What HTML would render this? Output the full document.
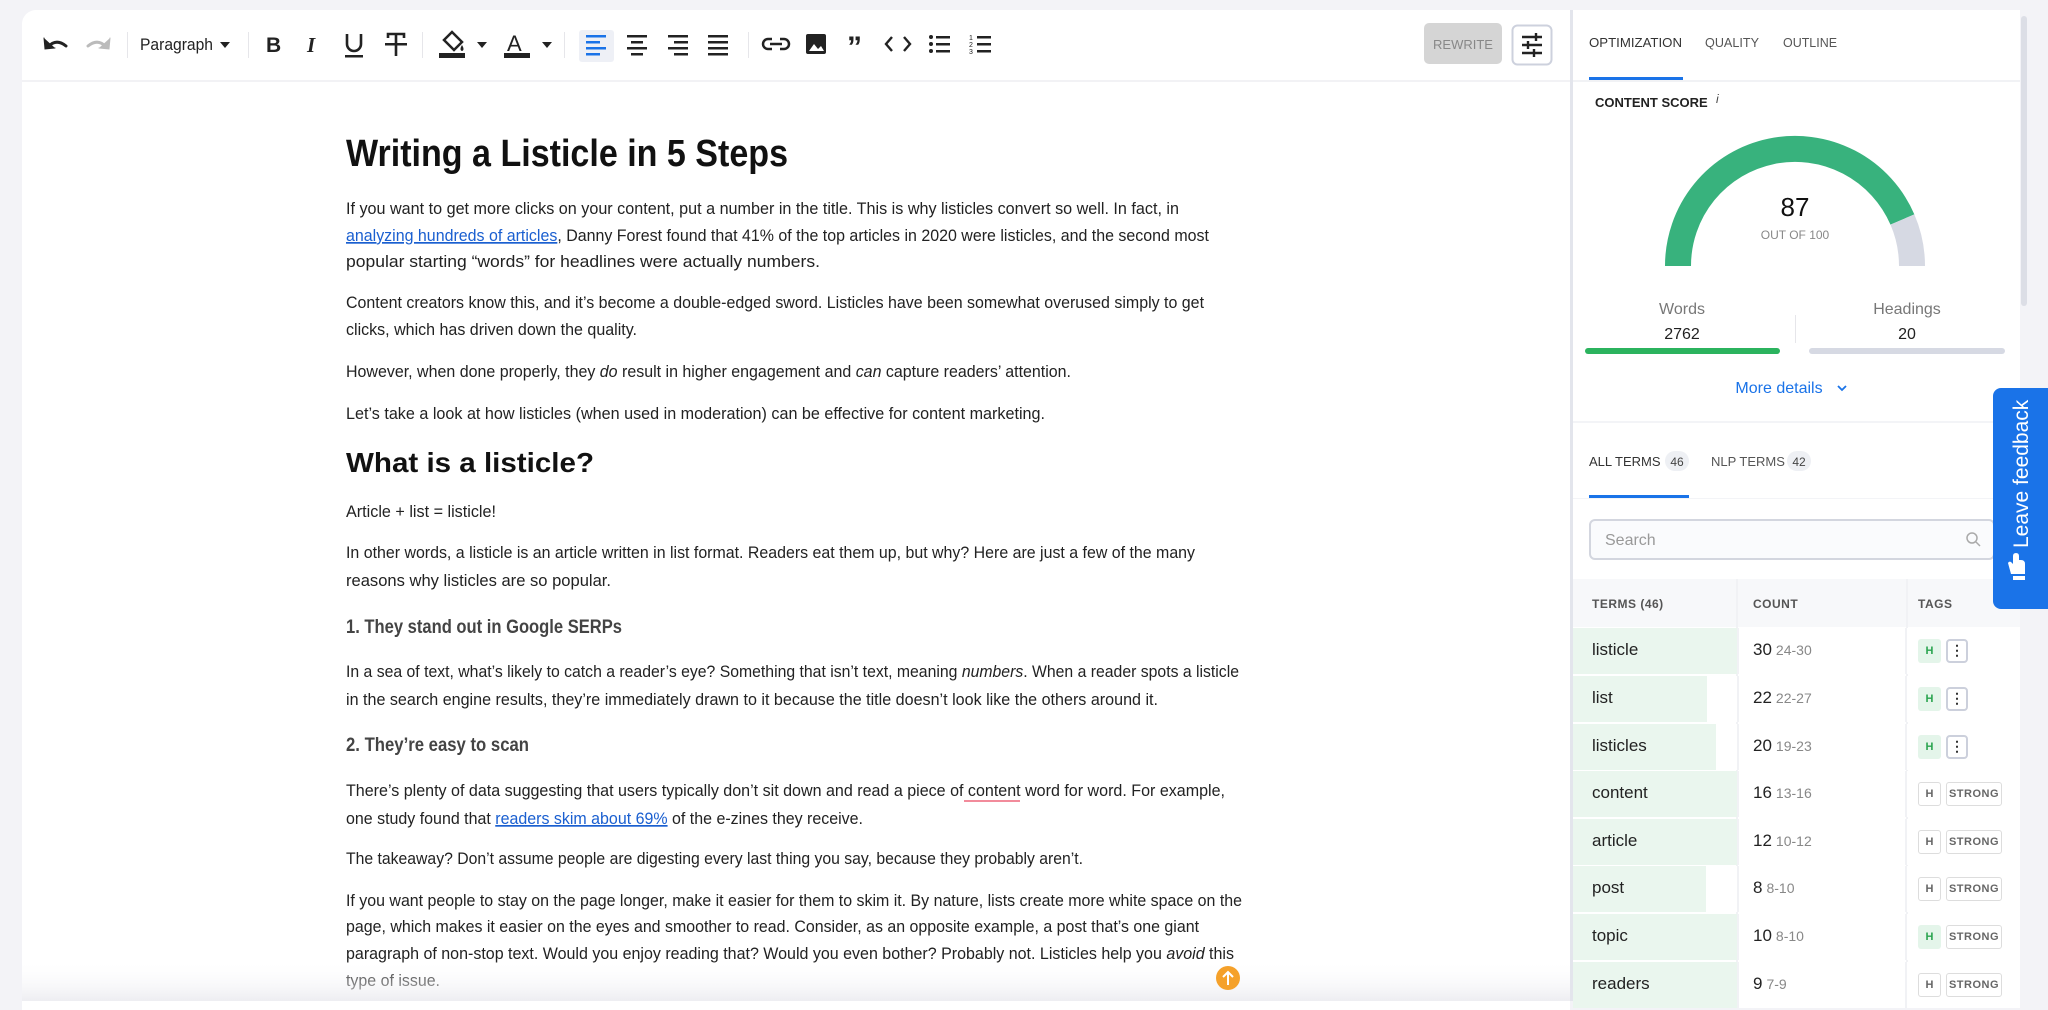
<!DOCTYPE html>
<html><head><meta charset="utf-8"><style>
*{margin:0;padding:0;box-sizing:border-box}
html,body{width:2048px;height:1001px;overflow:hidden;background:#f3f3f7;font-family:"Liberation Sans",sans-serif}
.card{position:absolute;left:22px;top:10px;width:1548px;height:1000px;background:#fff;border-top-left-radius:14px}
.tb{position:absolute;left:22px;top:10px;width:1548px;height:72px;border-bottom:2px solid #f2f2f5}
.sep{position:absolute;top:32px;width:1px;height:26px;background:#e6e6ea}
.ic{position:absolute}
.panel{position:absolute;left:1570px;top:10px;width:450px;height:991px;background:#fff;border-left:3px solid #e3e5ec}
.row{position:absolute;left:1573px;width:447px;height:46px;background:#fff}
.row .g{position:absolute;left:0;top:0;height:46px;background:#eaf6ee}
.row .term{position:absolute;left:19px;top:12px;font-size:17px;color:#222}
.row .cnt{position:absolute;left:180px;top:12px;font-size:17px;color:#222}
.row .cnt span{color:#888;font-size:14px;margin-left:4px}
.cw{position:absolute;left:164px;top:0;width:170px;height:46px;background:#fff;border-left:2px solid #f1f2f5;border-right:2px solid #f1f2f5}
.hb{position:absolute;left:345px;top:11px;width:23px;height:24px;border-radius:3px;font-size:11px;font-weight:bold;text-align:center;line-height:24px}
.hg{background:#e4f5ea;color:#2aa44f}
.hw{background:#fff;color:#666;border:1px solid #ddd;line-height:22px}
.dots{position:absolute;left:373px;top:11px;width:22px;height:24px;border:2px solid #ccd0dc;border-radius:4px;text-align:center;font-size:14px;font-weight:bold;line-height:18px;color:#333}
.strong{position:absolute;left:373px;top:11px;width:56px;height:24px;border:1px solid #ddd;border-radius:3px;font-size:11px;font-weight:bold;color:#666;text-align:center;line-height:22px;letter-spacing:.5px}
</style></head><body>
<div class="card"></div>
<div class="tb"></div>
<svg class="ic" style="left:0;top:0" width="1570" height="82">
<g fill="none" stroke-linecap="round">
<path d="M48 47 Q56 38 66 46" stroke="#222" stroke-width="3"/><path d="M44 38 L45 49 L55 48" fill="#222" stroke="#222" stroke-width="1"/>
<path d="M106 47 Q98 38 88 46" stroke="#bbb" stroke-width="3"/><path d="M110 38 L109 49 L99 48" fill="#bbb" stroke="#bbb" stroke-width="1"/>
</g>
<text x="140" y="50" font-size="17" fill="#222" font-family="Liberation Sans" textLength="73" lengthAdjust="spacingAndGlyphs">Paragraph</text>
<path d="M220 42h10l-5 6z" fill="#222"/>
<text x="266" y="52" font-size="21" font-weight="bold" fill="#222">B</text>
<text x="307" y="52" font-size="21" font-weight="bold" font-style="italic" fill="#222" font-family="Liberation Serif">I</text>
<path d="M347 34v10a7 7 0 0 0 14 0V34" stroke="#222" stroke-width="2.6" fill="none"/><rect x="345" y="55" width="18" height="2.5" fill="#222"/>
<path d="M396 34h-8v4M396 34h8v4M396 34v22" stroke="#222" stroke-width="2.6" fill="none"/><rect x="385" y="43" width="22" height="2.5" fill="#222"/>
<path d="M452 32 l10 10 -8 8 -10 -10z" stroke="#222" stroke-width="2.5" fill="none"/><path d="M462 45 q3 5 0 6 q-3 -1 0 -6z" fill="#222"/><rect x="439" y="53" width="26" height="5" fill="#222"/>
<path d="M477 42h10l-5 6z" fill="#222"/>
<text x="507" y="51" font-size="22" fill="#222">A</text><rect x="504" y="53" width="26" height="5" fill="#222"/>
<path d="M542 42h10l-5 6z" fill="#222"/>
<rect x="579" y="30" width="35" height="32" rx="3" fill="#eef0f6"/>
<g fill="#1a73e8"><rect x="586" y="35" width="20" height="2.5"/><rect x="586" y="41" width="14" height="2.5"/><rect x="586" y="47" width="20" height="2.5"/><rect x="586" y="53" width="14" height="2.5"/></g>
<g fill="#222"><rect x="627" y="35" width="20" height="2.5"/><rect x="631" y="41" width="12" height="2.5"/><rect x="627" y="47" width="20" height="2.5"/><rect x="631" y="53" width="12" height="2.5"/>
<rect x="668" y="35" width="20" height="2.5"/><rect x="674" y="41" width="14" height="2.5"/><rect x="668" y="47" width="20" height="2.5"/><rect x="674" y="53" width="14" height="2.5"/>
<rect x="708" y="35" width="20" height="2.5"/><rect x="708" y="41" width="20" height="2.5"/><rect x="708" y="47" width="20" height="2.5"/><rect x="708" y="53" width="20" height="2.5"/></g>
<path d="M772 39h-4a5 5 0 0 0 0 10h4M780 39h4a5 5 0 0 1 0 10h-4M770 44h12" stroke="#222" stroke-width="2.5" fill="none"/>
<rect x="806" y="34" width="20" height="20" rx="2" fill="#222"/><path d="M809 51l5-7 4 5 3-3 3 5z" fill="#fff"/>
<text x="847" y="57" font-size="30" font-weight="bold" fill="#222">”</text>
<path d="M892 37l-6 7 6 7M904 37l6 7-6 7" stroke="#222" stroke-width="2.4" fill="none"/>
<g fill="#222"><circle cx="931" cy="37" r="2"/><circle cx="931" cy="44" r="2"/><circle cx="931" cy="51" r="2"/><rect x="936" y="36" width="14" height="2.5"/><rect x="936" y="43" width="14" height="2.5"/><rect x="936" y="50" width="14" height="2.5"/>
<rect x="977" y="36" width="14" height="2.5"/><rect x="977" y="43" width="14" height="2.5"/><rect x="977" y="50" width="14" height="2.5"/></g>
<text x="969" y="40" font-size="7" fill="#222">1</text><text x="969" y="47" font-size="7" fill="#222">2</text><text x="969" y="54" font-size="7" fill="#222">3</text>
<rect x="1424" y="23" width="78" height="41" rx="5" fill="#d5d5d5"/>
<text x="1463" y="49" font-size="13" fill="#888" text-anchor="middle">REWRITE</text>
<rect x="1512.5" y="25.5" width="39" height="39" rx="5" fill="#fff" stroke="#cdd1dd" stroke-width="2"/>
<g stroke="#222" stroke-width="2.4"><path d="M1522 37h20M1522 45h20M1522 53h20"/><path d="M1536 33v8M1528 41v8M1534 49v8"/></g>
</svg>
<div class="sep" style="left:127px"></div><div class="sep" style="left:248px"></div><div class="sep" style="left:422px"></div><div class="sep" style="left:564px"></div><div class="sep" style="left:748px"></div>

<svg class="ic" style="left:0;top:0" width="1570" height="1001" font-family="Liberation Sans" font-size="17" fill="#222">
<text x="346" y="166" font-size="38" font-weight="bold" fill="#111" textLength="442" lengthAdjust="spacingAndGlyphs">Writing a Listicle in 5 Steps</text>
<text x="346" y="214" textLength="833" lengthAdjust="spacingAndGlyphs">If you want to get more clicks on your content, put a number in the title. This is why listicles convert so well. In fact, in</text>
<text x="346" y="241" textLength="863" lengthAdjust="spacingAndGlyphs"><tspan fill="#1a5fd0" text-decoration="underline">analyzing hundreds of articles</tspan>, Danny Forest found that 41% of the top articles in 2020 were listicles, and the second most</text>
<text x="346" y="267" textLength="474" lengthAdjust="spacingAndGlyphs">popular starting “words” for headlines were actually numbers.</text>
<text x="346" y="308" textLength="858" lengthAdjust="spacingAndGlyphs">Content creators know this, and it’s become a double-edged sword. Listicles have been somewhat overused simply to get</text>
<text x="346" y="335" textLength="291" lengthAdjust="spacingAndGlyphs">clicks, which has driven down the quality.</text>
<text x="346" y="377" textLength="725" lengthAdjust="spacingAndGlyphs">However, when done properly, they <tspan font-style="italic">do</tspan> result in higher engagement and <tspan font-style="italic">can</tspan> capture readers’ attention.</text>
<text x="346" y="419" textLength="699" lengthAdjust="spacingAndGlyphs">Let’s take a look at how listicles (when used in moderation) can be effective for content marketing.</text>
<text x="346" y="472" font-size="28" font-weight="bold" fill="#111" textLength="248" lengthAdjust="spacingAndGlyphs">What is a listicle?</text>
<text x="346" y="517" textLength="150" lengthAdjust="spacingAndGlyphs">Article + list = listicle!</text>
<text x="346" y="558" textLength="849" lengthAdjust="spacingAndGlyphs">In other words, a listicle is an article written in list format. Readers eat them up, but why? Here are just a few of the many</text>
<text x="346" y="586" textLength="265" lengthAdjust="spacingAndGlyphs">reasons why listicles are so popular.</text>
<text x="346" y="633" font-size="19" font-weight="bold" fill="#444" textLength="276" lengthAdjust="spacingAndGlyphs">1. They stand out in Google SERPs</text>
<text x="346" y="677" textLength="893" lengthAdjust="spacingAndGlyphs">In a sea of text, what’s likely to catch a reader’s eye? Something that isn’t text, meaning <tspan font-style="italic">numbers</tspan>. When a reader spots a listicle</text>
<text x="346" y="705" textLength="812" lengthAdjust="spacingAndGlyphs">in the search engine results, they’re immediately drawn to it because the title doesn’t look like the others around it.</text>
<text x="346" y="751" font-size="19" font-weight="bold" fill="#444" textLength="183" lengthAdjust="spacingAndGlyphs">2. They’re easy to scan</text>
<text x="346" y="796" textLength="879" lengthAdjust="spacingAndGlyphs">There’s plenty of data suggesting that users typically don’t sit down and read a piece of content word for word. For example,</text>
<rect x="964" y="800" width="56" height="2" fill="#f28b9b"/>
<text x="346" y="824" textLength="517" lengthAdjust="spacingAndGlyphs">one study found that <tspan fill="#1a5fd0" text-decoration="underline">readers skim about 69%</tspan> of the e-zines they receive.</text>
<text x="346" y="864" textLength="737" lengthAdjust="spacingAndGlyphs">The takeaway? Don’t assume people are digesting every last thing you say, because they probably aren’t.</text>
<text x="346" y="906" textLength="896" lengthAdjust="spacingAndGlyphs">If you want people to stay on the page longer, make it easier for them to skim it. By nature, lists create more white space on the</text>
<text x="346" y="932" textLength="853" lengthAdjust="spacingAndGlyphs">page, which makes it easier on the eyes and smoother to read. Consider, as an opposite example, a post that’s one giant</text>
<text x="346" y="959" textLength="888" lengthAdjust="spacingAndGlyphs">paragraph of non-stop text. Would you enjoy reading that? Would you even bother? Probably not. Listicles help you <tspan font-style="italic">avoid</tspan> this</text>
<text x="346" y="986" textLength="94" lengthAdjust="spacingAndGlyphs">type of issue.</text>
<defs><linearGradient id="fd" x1="0" y1="0" x2="0" y2="1"><stop offset="0" stop-color="#fff" stop-opacity="0"/><stop offset="1" stop-color="#e9e9ee" stop-opacity=".8"/></linearGradient></defs>
<rect x="22" y="960" width="1548" height="41" fill="url(#fd)"/>
<circle cx="1228" cy="978" r="12" fill="#f5a12a"/><path d="M1228 985v-13M1223 977l5-5 5 5" stroke="#fff" stroke-width="2" fill="none"/>
</svg>

<div class="panel"></div>
<div style="position:absolute;left:2020px;top:10px;width:12px;height:991px;background:#f3f3f7"></div>
<div style="position:absolute;left:2021px;top:16px;width:6px;height:290px;background:#dcdee6;border-radius:3px"></div>
<svg class="ic" style="left:1570px;top:0" width="478" height="1001" font-family="Liberation Sans">
<text x="19" y="47" font-size="13" fill="#333" textLength="93" lengthAdjust="spacingAndGlyphs">OPTIMIZATION</text>
<text x="135" y="47" font-size="13" fill="#555" textLength="54" lengthAdjust="spacingAndGlyphs">QUALITY</text>
<text x="213" y="47" font-size="13" fill="#555" textLength="54" lengthAdjust="spacingAndGlyphs">OUTLINE</text>
<rect x="19" y="77" width="94" height="3" fill="#1a73e8"/>
<rect x="3" y="80" width="447" height="2" fill="#f1f2f5"/>
<text x="25" y="107" font-size="13" font-weight="bold" fill="#222">CONTENT SCORE</text>
<text x="146" y="103" font-size="12" font-style="italic" fill="#444">i</text>
<path d="M108 266 A117 117 0 0 1 332.4 219.5" stroke="#38b27d" stroke-width="26" fill="none"/>
<path d="M332.4 219.5 A117 117 0 0 1 342 266" stroke="#d6d9e3" stroke-width="26" fill="none"/>
<text x="225" y="216" font-size="26" fill="#111" text-anchor="middle">87</text>
<text x="225" y="239" font-size="12" fill="#888" text-anchor="middle">OUT OF 100</text>
<text x="112" y="314" font-size="16" fill="#777" text-anchor="middle">Words</text>
<text x="112" y="339" font-size="16" fill="#222" text-anchor="middle">2762</text>
<text x="337" y="314" font-size="16" fill="#777" text-anchor="middle">Headings</text>
<text x="337" y="339" font-size="16" fill="#222" text-anchor="middle">20</text>
<rect x="225" y="315" width="1" height="28" fill="#e6e6ea"/>
<rect x="15" y="348" width="195" height="6" rx="3" fill="#2bb35e"/>
<rect x="239" y="348" width="196" height="6" rx="3" fill="#d6d9e3"/>
<text x="209" y="393" font-size="16" fill="#1a73e8" text-anchor="middle">More details</text>
<path d="M268 386l4 4 4-4" stroke="#1a73e8" stroke-width="1.8" fill="none"/>
<rect x="3" y="421" width="447" height="2" fill="#f3f4f7"/>
<text x="19" y="466" font-size="13" fill="#333">ALL TERMS</text>
<rect x="95" y="451" width="24" height="20" rx="10" fill="#eef0f4"/><text x="107" y="466" font-size="12" fill="#444" text-anchor="middle">46</text>
<text x="141" y="466" font-size="13" fill="#555">NLP TERMS</text>
<rect x="217" y="451" width="24" height="20" rx="10" fill="#eef0f4"/><text x="229" y="466" font-size="12" fill="#444" text-anchor="middle">42</text>
<rect x="19" y="495" width="100" height="3" fill="#1a73e8"/>
<rect x="3" y="498" width="447" height="1" fill="#f3f4f7"/>
<rect x="20" y="520" width="404" height="39" rx="5" fill="#fafbfd" stroke="#d3d6df" stroke-width="2"/>
<text x="35" y="545" font-size="16" fill="#999">Search</text>
<circle cx="402" cy="538" r="5" stroke="#aaa" stroke-width="1.5" fill="none"/><path d="M406 542l4 4" stroke="#aaa" stroke-width="1.5"/>
<rect x="3" y="579" width="447" height="48" fill="#f7f8fa"/>
<rect x="166" y="579" width="2" height="422" fill="#f1f2f5"/><rect x="336" y="579" width="2" height="422" fill="#f1f2f5"/>
<text x="22" y="608" font-size="12" font-weight="bold" fill="#555" letter-spacing=".5">TERMS (46)</text>
<text x="183" y="608" font-size="12" font-weight="bold" fill="#555" letter-spacing=".5">COUNT</text>
<text x="348" y="608" font-size="12" font-weight="bold" fill="#555" letter-spacing=".5">TAGS</text>
</svg>

<div class="row" style="top:628px"><div class="g" style="width:164px"></div><div class="cw"></div><div class="term">listicle</div><div class="cnt">30<span>24-30</span></div><div class="hb hg">H</div><div class="dots">⋮</div></div>
<div class="row" style="top:676px"><div class="g" style="width:134px"></div><div class="cw"></div><div class="term">list</div><div class="cnt">22<span>22-27</span></div><div class="hb hg">H</div><div class="dots">⋮</div></div>
<div class="row" style="top:724px"><div class="g" style="width:143px"></div><div class="cw"></div><div class="term">listicles</div><div class="cnt">20<span>19-23</span></div><div class="hb hg">H</div><div class="dots">⋮</div></div>
<div class="row" style="top:771px"><div class="g" style="width:164px"></div><div class="cw"></div><div class="term">content</div><div class="cnt">16<span>13-16</span></div><div class="hb hw">H</div><div class="strong">STRONG</div></div>
<div class="row" style="top:819px"><div class="g" style="width:164px"></div><div class="cw"></div><div class="term">article</div><div class="cnt">12<span>10-12</span></div><div class="hb hw">H</div><div class="strong">STRONG</div></div>
<div class="row" style="top:866px"><div class="g" style="width:133px"></div><div class="cw"></div><div class="term">post</div><div class="cnt">8<span>8-10</span></div><div class="hb hw">H</div><div class="strong">STRONG</div></div>
<div class="row" style="top:914px"><div class="g" style="width:164px"></div><div class="cw"></div><div class="term">topic</div><div class="cnt">10<span>8-10</span></div><div class="hb hg">H</div><div class="strong">STRONG</div></div>
<div class="row" style="top:962px"><div class="g" style="width:164px"></div><div class="cw"></div><div class="term">readers</div><div class="cnt">9<span>7-9</span></div><div class="hb hw">H</div><div class="strong">STRONG</div></div>

<div style="position:absolute;left:1993px;top:388px;width:60px;height:221px;background:#1a73e8;border-radius:8px 0 0 8px"></div>
<svg class="ic" style="left:1993px;top:388px" width="55" height="221">
<text transform="translate(35,160) rotate(-90)" font-size="21" fill="#fff" font-family="Liberation Sans">Leave feedback</text>
<path d="M18 186 h14 v-10 q0-4-4-4 h-2 v-4 q0-3-3-3 t-3 3 v8 l-2-2 q-2-1-3 1z" fill="#fff"/><rect x="20" y="188" width="12" height="4" fill="#fff"/>
</svg>
</body></html>
